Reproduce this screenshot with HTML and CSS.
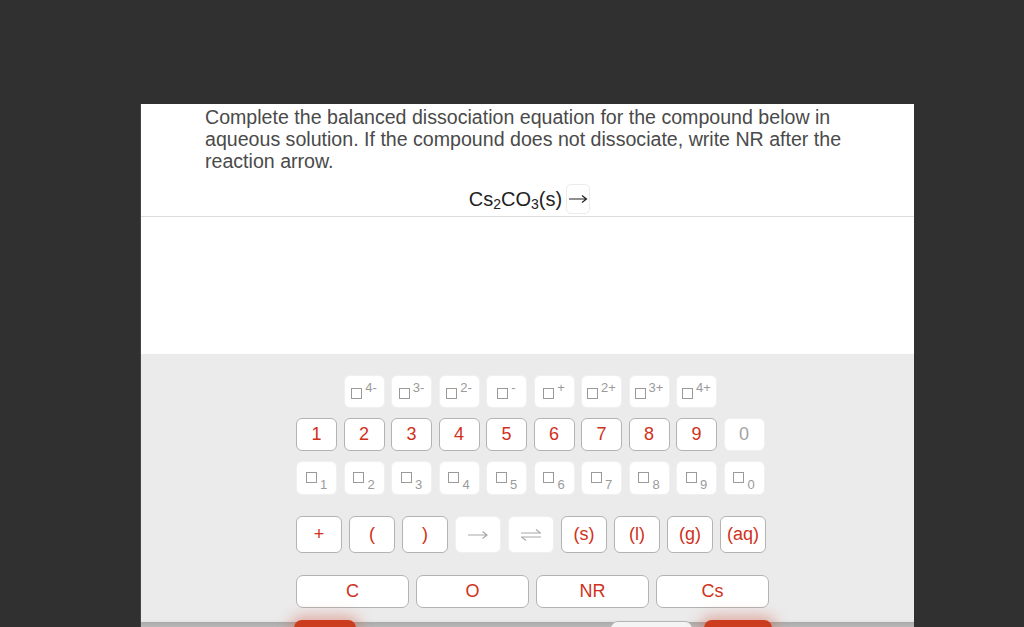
FILE: index.html
```html
<!DOCTYPE html>
<html>
<head>
<meta charset="utf-8">
<link rel="stylesheet" href="styles.css">
</head>
<body>
<div class="panel">
  <section class="question">
    <p class="prompt">Complete the balanced dissociation equation for the compound below in aqueous solution. If the compound does not dissociate, write NR after the reaction arrow.</p>
    <div class="equation"><span class="formula">Cs<sub>2</sub>CO<sub>3</sub>(s)</span><span class="arrow-box"><svg width="19" height="10" viewBox="0 0 19 10"><path d="M0 5H17.5M13 1.5L17.5 5L13 8.5" fill="none" stroke="#222" stroke-width="1.2"/></svg></span></div>
  </section>
  <section class="answer"></section>
  <section class="keyboard">
    <div class="row row-charge">
      <span class="key small off"><i class="sq"></i><sup>4-</sup></span>
      <span class="key small off"><i class="sq"></i><sup>3-</sup></span>
      <span class="key small off"><i class="sq"></i><sup>2-</sup></span>
      <span class="key small off"><i class="sq"></i><sup>-</sup></span>
      <span class="key small off"><i class="sq"></i><sup>+</sup></span>
      <span class="key small off"><i class="sq"></i><sup>2+</sup></span>
      <span class="key small off"><i class="sq"></i><sup>3+</sup></span>
      <span class="key small off"><i class="sq"></i><sup>4+</sup></span>
    </div>
    <div class="row">
      <span class="key small">1</span>
      <span class="key small">2</span>
      <span class="key small">3</span>
      <span class="key small">4</span>
      <span class="key small">5</span>
      <span class="key small">6</span>
      <span class="key small">7</span>
      <span class="key small">8</span>
      <span class="key small">9</span>
      <span class="key small off">0</span>
    </div>
    <div class="row row-sub">
      <span class="key small off"><i class="sq"></i><sub>1</sub></span>
      <span class="key small off"><i class="sq"></i><sub>2</sub></span>
      <span class="key small off"><i class="sq"></i><sub>3</sub></span>
      <span class="key small off"><i class="sq"></i><sub>4</sub></span>
      <span class="key small off"><i class="sq"></i><sub>5</sub></span>
      <span class="key small off"><i class="sq"></i><sub>6</sub></span>
      <span class="key small off"><i class="sq"></i><sub>7</sub></span>
      <span class="key small off"><i class="sq"></i><sub>8</sub></span>
      <span class="key small off"><i class="sq"></i><sub>9</sub></span>
      <span class="key small off"><i class="sq"></i><sub>0</sub></span>
    </div>
    <div class="row row-ops">
      <span class="key mid">+</span>
      <span class="key mid">(</span>
      <span class="key mid">)</span>
      <span class="key mid off"><svg width="20" height="10" viewBox="0 0 20 10"><path d="M0 5H19M14.5 1.5L19 5L14.5 8.5" fill="none" stroke="#a8a8a8" stroke-width="1.2"/></svg></span>
      <span class="key mid off"><svg width="20" height="14" viewBox="0 0 20 14"><path d="M0 5H19.5L15 1.5M20 9H0.5L5 12.5" fill="none" stroke="#a8a8a8" stroke-width="1.2"/></svg></span>
      <span class="key mid">(s)</span>
      <span class="key mid">(l)</span>
      <span class="key mid">(g)</span>
      <span class="key mid">(aq)</span>
    </div>
    <div class="row row-el">
      <span class="key wide">C</span>
      <span class="key wide">O</span>
      <span class="key wide">NR</span>
      <span class="key wide">Cs</span>
    </div>
  </section>
  <footer class="footer">
    <span class="pill red p1"></span>
    <span class="pill white p2"></span>
    <span class="pill red p3"></span>
  </footer>
</div>
</body>
</html>
```
FILE: styles.css
```css
html, body {
  margin: 0;
  padding: 0;
}
body {
  background: #303030;
  font-family: "Liberation Sans", Arial, sans-serif;
  height: 627px;
  overflow: hidden;
}
.panel {
  margin: 104px 0 0 141px;
  width: 773px;
  height: 523px;
  background: #fff;
  display: flex;
  flex-direction: column;
  overflow: hidden;
  box-shadow: -1px 0 0 #454545;
}
.question {
  height: 113px;
  border-bottom: 1px solid #dcdcdc;
  padding: 2px 0 0 64px;
  box-sizing: border-box;
}
.prompt {
  margin: 0;
  width: 648px;
  font-size: 19.6px;
  line-height: 22px;
  color: #4a4a4a;
  letter-spacing: 0;
}
.equation {
  margin: 12px 0 0 -64px;
  display: flex;
  justify-content: center;
  align-items: center;
  padding-left: 4px;
  height: 30px;
}
.formula {
  font-size: 20px;
  color: #222;
}
.formula sub {
  font-size: 14px;
  vertical-align: -3px;
  line-height: 0;
}
.arrow-box {
  display: inline-flex;
  align-items: center;
  justify-content: center;
  width: 24px;
  height: 30px;
  margin-left: 4px;
  border: 1px solid #ececec;
  border-radius: 5px;
  box-sizing: border-box;
}
.answer {
  height: 137px;
}
.keyboard {
  background: #ebebeb;
  height: 266px;
  padding: 21px 0 0 155px;
  box-sizing: border-box;
}
.row {
  display: flex;
  gap: 6.5px;
  margin-bottom: 10px;
}
.row-charge {
  padding-left: 47.5px;
}
.row-sub {
  margin-bottom: 21px;
}
.row-ops {
  gap: 7px;
  margin-bottom: 22px;
}
.row-el {
  gap: 7px;
}
.key {
  display: flex;
  align-items: center;
  justify-content: center;
  background: #fff;
  border: 1px solid #b3b3b3;
  border-radius: 6px;
  box-sizing: border-box;
  color: #cf311b;
  font-size: 18px;
}
.key.small {
  width: 41px;
  height: 33px;
}
.row-sub .key.small {
  height: 34px;
}
.key.mid {
  width: 46px;
  height: 37px;
}
.key.wide {
  width: 113px;
  height: 33px;
  border-radius: 7px;
}
.key.off {
  border-color: #f0f0f0;
  color: #a3a3a3;
}
.sq {
  display: inline-block;
  width: 11px;
  height: 11px;
  border: 1px solid #9a9a9a;
  box-sizing: border-box;
}
.key sup {
  font-size: 13px;
  line-height: 0;
  margin-left: 3px;
  position: relative;
  top: -4px;
  vertical-align: baseline;
  color: #9a9a9a;
}
.key sub {
  font-size: 13px;
  line-height: 0;
  margin-left: 3px;
  position: relative;
  top: 7px;
  vertical-align: baseline;
  color: #9a9a9a;
}
.row-sub .sq {
  margin-top: -1px;
}
.row-charge .sq {
  margin-top: 3px;
}
.footer {
  position: relative;
  height: 7px;
  background: linear-gradient(#e6e6e6 0, #e6e6e6 2px, #a9a9a9 2px, #b9b9b9 100%);
}
.pill {
  position: absolute;
  top: 0;
  height: 12px;
  border-radius: 8px 8px 0 0;
}
.pill.red {
  background: #cc3c1f;
  box-shadow: 0 0 14px 4px rgba(210, 90, 70, 0.45);
}
.pill.white {
  background: #f4f4f4;
  border: 1px solid #b5b5b5;
  top: 1px;
}
.p1 { left: 153px; width: 62px; }
.p2 { left: 469px; width: 81px; }
.p3 { left: 563px; width: 68px; }
```
